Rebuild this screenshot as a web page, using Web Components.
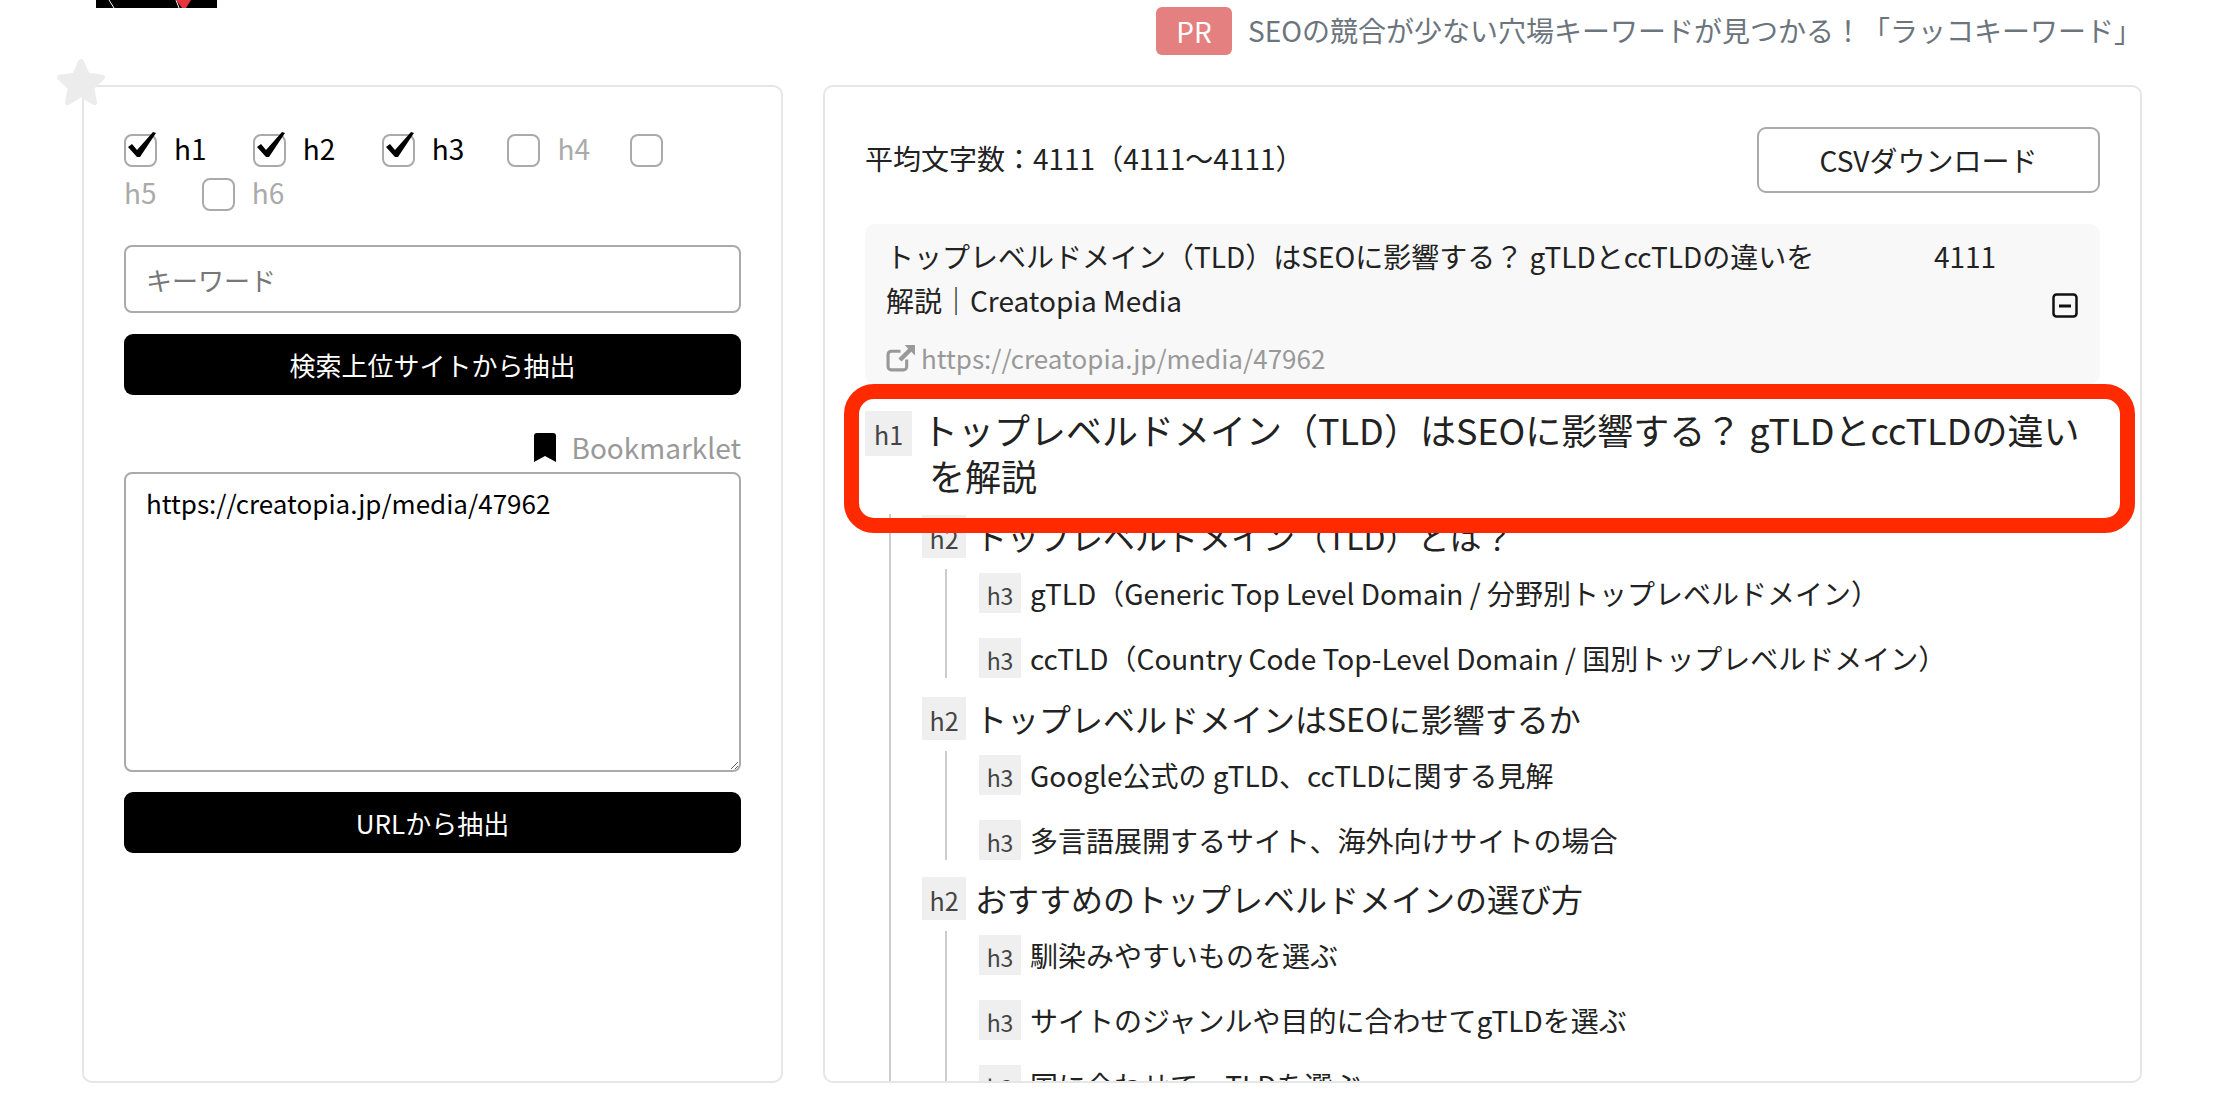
<!DOCTYPE html>
<html lang="ja">
<head>
<meta charset="utf-8">
<title>見出し抽出</title>
<style>
  html, body { margin: 0; height: 100%; background: #fff; overflow: hidden; }
  body { font-family: "Noto Sans CJK JP", "Noto Sans", sans-serif; color: #222; }
</style>
</head>
<body>
<app-page>
  <top-bar slot="top"></top-bar>
  <filter-panel slot="left"></filter-panel>
  <result-panel slot="right"></result-panel>
</app-page>

<script>
class AppPage extends HTMLElement {
  connectedCallback() {
    this.attachShadow({ mode: 'open' });
    this.shadowRoot.innerHTML = `
      <style>
        :host { display: block; position: relative; width: 2230px; height: 1108px; overflow: hidden; }
        .main { display: flex; gap: 40px; padding: 0 88px 0 82px; height: 998px; }
        .star { position: absolute; left: 54px; top: 57px; width: 54px; height: 52px; z-index: 2; }
        ::slotted([slot="left"]) { width: 701px; flex: none; }
        ::slotted([slot="right"]) { flex: 1; min-width: 0; }
      </style>
      <slot name="top"></slot>
      <svg class="star" viewBox="0 0 54 52"><path d="M27 2c1.500 0 2.500 1 3.200 2.800l5 11.200 12.500 1.500c3.500.5 4.500 3 2 5.300l-9.300 8.700 2.500 13c.6 3.200-1.600 4.600-4.300 3L27 40.500 15.400 47.500c-2.700 1.600-4.900.2-4.300-3l2.500-13-9.300-8.700c-2.500-2.300-1.500-4.800 2-5.300L19 16l4.800-11.200C24.500 3 25.500 2 27 2z" fill="#ececec"/></svg>
      <div class="main"><slot name="left"></slot><slot name="right"></slot></div>
    `;
  }
}

class TopBar extends HTMLElement {
  connectedCallback() {
    this.attachShadow({ mode: 'open' });
    this.shadowRoot.innerHTML = `
      <style>
        :host { display: flex; justify-content: space-between; height: 85px; padding: 0 88px 0 96px; box-sizing: border-box; }
        .logo { width: 121px; height: 8px; display: block; }
        .ad { display: flex; align-items: center; gap: 16px; height: 48px; margin-top: 7px; color: #6c757d; font-size: 28px; white-space: nowrap; }
        .ad .txt { margin-top: -3px; }
        .pr { width: 76px; height: 48px; border-radius: 6px; background: #e58080; color: #fff; display: flex; align-items: center; justify-content: center; font-size: 28px; }
      </style>
      <svg class="logo" viewBox="0 0 121 8">
        <rect width="121" height="8" fill="#000"/>
        <path d="M13 0l5 8" stroke="#fff" stroke-width="1" fill="none"/>
        <path d="M80 0l3 8" stroke="#fff" stroke-width="1" fill="none"/>
        <path d="M80 0h15l-5 8h-4z" fill="#e8343f"/>
      </svg>
      <div class="ad"><span class="pr">PR</span><span class="txt">SEOの競合が少ない穴場キーワードが見つかる！「ラッコキーワード」</span></div>
    `;
  }
}

class HeadingCheck extends HTMLElement {
  connectedCallback() {
    const checked = this.hasAttribute('checked');
    const space = this.getAttribute('space') || '40';
    this.attachShadow({ mode: 'open' });
    this.shadowRoot.innerHTML = `
      <style>
        :host { display: inline; font-size: 28px; line-height: 44px; color: ${checked ? '#000' : '#aaa'}; }
        .box { display: inline-block; position: relative; width: 33px; height: 33px; box-sizing: border-box; border: 2px solid #aaa; border-radius: 8px; vertical-align: -7px; margin-right: 17px; background: #fff; }
        svg { position: absolute; left: 1px; top: -4px; width: 30px; height: 28px; }
        .label { margin-right: ${space}px; }
      </style>
      <span class="box">${checked ? '<svg viewBox="0 0 30 28"><path d="M1 15l4-3 5 6L26 0l3 1-16 24h-3z" fill="#000"/></svg>' : ''}</span><span class="label"><slot></slot></span>
    `;
  }
}

class FilterPanel extends HTMLElement {
  connectedCallback() {
    this.attachShadow({ mode: 'open' });
    this.shadowRoot.innerHTML = `
      <style>
        :host { display: block; box-sizing: border-box; height: 998px; border: 2px solid #e6e6e6; border-radius: 10px; padding: 39px 40px 0; background: #fff; font-size: 27px; }
        .checks { width: 590px; height: 94px; }
        input, textarea { display: block; box-sizing: border-box; width: 617px; font: inherit; border: 2px solid #aaa; border-radius: 8px; background: #fff; color: #000; outline: none; margin: 0; }
        input { height: 68px; margin-top: 25px; padding: 0 20px; font-size: 26px; }
        input::placeholder { color: #777; opacity: 1; }
        textarea { height: 300px; padding: 7px 20px; line-height: 44px; font-size: 26px; resize: vertical; }
        .btn { display: flex; align-items: center; justify-content: center; width: 617px; height: 61px; border-radius: 9px; background: #000; color: #fff; font-size: 26px; }
        .search { margin-top: 21px; }
        .url { margin-top: 20px; }
        .mark { display: flex; justify-content: flex-end; align-items: center; gap: 15px; width: 617px; height: 38px; margin-top: 33px; margin-bottom: 6px; color: #999; font-size: 28px; }
        .mark svg { width: 22px; height: 29px; margin-top: 1px; }
      </style>
      <div class="checks">
        <heading-check checked>h1</heading-check><heading-check checked>h2</heading-check><heading-check checked space="37">h3</heading-check><heading-check space="34">h4</heading-check><heading-check space="39">h5</heading-check><heading-check>h6</heading-check>
      </div>
      <input type="text" placeholder="キーワード">
      <div class="btn search">検索上位サイトから抽出</div>
      <div class="mark"><svg viewBox="0 0 22 29"><path d="M0 3a3 3 0 0 1 3-3h16a3 3 0 0 1 3 3v26l-11-6-11 6z" fill="#000"/></svg><span>Bookmarklet</span></div>
      <textarea>https://creatopia.jp/media/47962</textarea>
      <div class="btn url">URLから抽出</div>
    `;
  }
}

class OutlineRow extends HTMLElement {
  connectedCallback() {
    const level = this.getAttribute('level');
    const sizes = {
      h1: 'font-size:36px;line-height:46px;',
      h2: 'font-size:32px;line-height:43px;',
      h3: 'font-size:28px;line-height:40px;'
    };
    const tags = {
      h1: 'width:47px;height:45px;font-size:25px;margin-right:10px;padding-top:2px;',
      h2: 'width:44px;height:43px;font-size:25px;margin-right:9px;padding-top:4px;',
      h3: 'width:42px;height:40px;font-size:23px;margin-right:9px;padding-top:4px;'
    };
    this.attachShadow({ mode: 'open' });
    this.shadowRoot.innerHTML = `
      <style>
        :host { display: flex; align-items: flex-start; color: #222; ${sizes[level]} }
        .tag { display: flex; flex: none; box-sizing: border-box; align-items: center; justify-content: center; background: #efefef; color: #444; line-height: 1; ${tags[level]} }
        .text { min-width: 0; ${level === 'h1' ? 'margin-top: -5px; text-indent: -7px; padding-left: 7px;' : ''} }
      </style>
      <span class="tag">${level}</span><span class="text"><slot></slot></span>
    `;
  }
}

class OutlineGroup extends HTMLElement {
  connectedCallback() {
    this.attachShadow({ mode: 'open' });
    this.shadowRoot.innerHTML = `
      <style>
        :host { display: block; }
        ::slotted(outline-row[level="h2"]) { margin-bottom: 11px; }
        .sub { display: flex; flex-direction: column; gap: 25px; margin-left: 23px; padding: 4px 0 0 32px; border-left: 2px solid #ccc; box-sizing: border-box; }
      </style>
      <slot name="head"></slot>
      <div class="sub"><slot></slot></div>
    `;
  }
}

class ResultPanel extends HTMLElement {
  connectedCallback() {
    this.attachShadow({ mode: 'open' });
    this.shadowRoot.innerHTML = `
      <style>
        :host { display: block; position: relative; box-sizing: border-box; height: 998px; border: 2px solid #e6e6e6; border-radius: 10px; padding: 40px 40px 0; background: #fff; overflow: hidden; font-size: 28px; color: #222; }
        .head { display: flex; justify-content: space-between; align-items: center; height: 66px; }
        .head .avg { margin-top: -5px; }
        .csv { box-sizing: border-box; width: 343px; height: 66px; display: flex; align-items: center; justify-content: center; border: 2px solid #aaa; border-radius: 9px; color: #222; font-size: 28px; }
        .site { display: grid; grid-template-columns: 934px 1fr 44px; box-sizing: border-box; height: 160px; margin-top: 31px; padding: 10px 22px 0 21px; border-radius: 10px; background: #f8f8f8; line-height: 44px; font-size: 28px; }
        .num { padding-left: 114px; }
        .minus { align-self: start; margin: 59px 0 0 18px; }
        .minus svg { display: block; width: 26px; height: 25px; }
        .link { grid-column: 1 / 4; display: flex; align-items: center; gap: 5px; color: #999; margin-top: 2px; font-size: 26px; }
        .link svg { width: 30px; height: 28px; flex: none; }
        .tree { padding-top: 27px; position: relative; }
        .rows { border-left: 2px solid #ccc; margin-left: 24px; margin-top: 16px; padding-top: 1px; }
        .rows outline-group { margin: 0 0 17px 31px; }
        .rows outline-group:first-child { margin-bottom: 19px; }
        .note { position: absolute; left: 19px; top: 297px; width: 1291px; height: 149px; box-sizing: border-box; border: 15px solid #ff2a00; border-radius: 30px; z-index: 3; pointer-events: none; }
      </style>
      <div class="head"><span class="avg">平均文字数：4111（4111〜4111）</span><span class="csv">CSVダウンロード</span></div>
      <div class="site">
        <span>トップレベルドメイン（TLD）はSEOに影響する？ gTLDとccTLDの違いを解説｜Creatopia Media</span>
        <span class="num">4111</span>
        <span class="minus"><svg viewBox="0 0 26 25"><rect x="1.500" y="1.500" width="23" height="22" rx="3" fill="none" stroke="#111" stroke-width="2.500"/><rect x="7" y="11.500" width="12" height="3" fill="#111"/></svg></span>
        <span class="link"><svg viewBox="0 0 29 27"><path d="M20 15v7a3 3 0 0 1-3 3H5a3 3 0 0 1-3-3V10a3 3 0 0 1 3-3h9" fill="none" stroke="#999" stroke-width="3"/><path d="M18 1h10v10l-3.500-3.500-9.500 9.500-3-3 9.500-9.500z" fill="#999"/></svg><span>https://creatopia.jp/media/47962</span></span>
      </div>
      <div class="tree">
        <outline-row level="h1">トップレベルドメイン（TLD）はSEOに影響する？ gTLDとccTLDの違いを解説</outline-row>
        <div class="rows">
          <outline-group><outline-row slot="head" level="h2">トップレベルドメイン（TLD）とは？</outline-row>
            <outline-row level="h3">gTLD（Generic Top Level Domain / 分野別トップレベルドメイン）</outline-row>
            <outline-row level="h3">ccTLD（Country Code Top-Level Domain / 国別トップレベルドメイン）</outline-row>
          </outline-group>
          <outline-group><outline-row slot="head" level="h2">トップレベルドメインはSEOに影響するか</outline-row>
            <outline-row level="h3">Google公式の gTLD、ccTLDに関する見解</outline-row>
            <outline-row level="h3">多言語展開するサイト、海外向けサイトの場合</outline-row>
          </outline-group>
          <outline-group><outline-row slot="head" level="h2">おすすめのトップレベルドメインの選び方</outline-row>
            <outline-row level="h3">馴染みやすいものを選ぶ</outline-row>
            <outline-row level="h3">サイトのジャンルや目的に合わせてgTLDを選ぶ</outline-row>
            <outline-row level="h3">国に合わせてccTLDを選ぶ</outline-row>
          </outline-group>
        </div>
      </div>
      <div class="note"></div>
    `;
  }
}

customElements.define('app-page', AppPage);
customElements.define('top-bar', TopBar);
customElements.define('heading-check', HeadingCheck);
customElements.define('filter-panel', FilterPanel);
customElements.define('outline-row', OutlineRow);
customElements.define('outline-group', OutlineGroup);
customElements.define('result-panel', ResultPanel);
</script>
</body>
</html>
